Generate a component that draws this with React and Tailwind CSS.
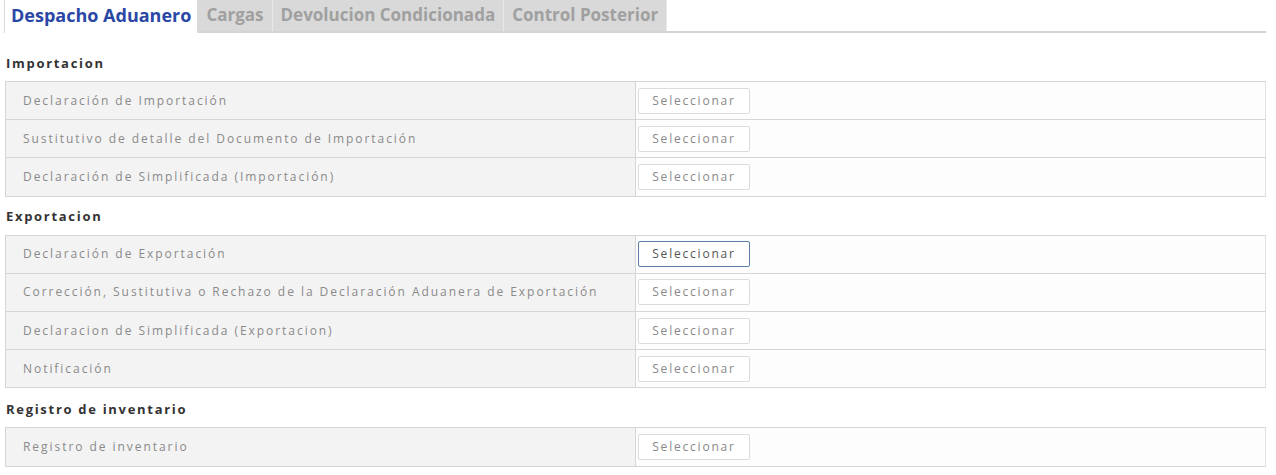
import React from "react";

const sections = [
  {
    title: "Importacion",
    h: "h-[48px]",
    rows: [
      "Declaración de Importación",
      "Sustitutivo de detalle del Documento de Importación",
      "Declaración de Simplificada (Importación)",
    ],
  },
  {
    title: "Exportacion",
    h: "h-[38px]",
    rows: [
      "Declaración de Exportación",
      "Corrección, Sustitutiva o Rechazo de la Declaración Aduanera de Exportación",
      "Declaracion de Simplificada (Exportacion)",
      "Notificación",
    ],
  },
  {
    title: "Registro de inventario",
    h: "h-[39px]",
    rows: ["Registro de inventario"],
  },
];

const tabFont = { fontFamily: '"Open Sans", sans-serif' };

export default function App() {
  return (
    <div className="w-[1276px] h-[475px] bg-white overflow-hidden" style={{ fontFamily: '"Open Sans", "DejaVu Sans", sans-serif' }}>
      <div className="flex items-end h-[33px] border-b-2 border-[#d4d4d4] mr-[10px] ml-[4px]">
        <div
          className="h-[35px] -mb-[2px] pb-[2px] px-[6px] flex items-center border-l border-t border-r border-[#dcdcdc] bg-white text-[18px] font-bold text-[#2a47a6]"
          style={tabFont}
        >
          Despacho Aduanero
        </div>
        {["Cargas", "Devolucion Condicionada", "Control Posterior"].map((t) => (
          <div
            key={t}
            className="h-[33px] px-[8px] flex items-center bg-[#d9d9d9] border-r border-[#e8e8e8] text-[17px] font-bold text-[#a0a0a0]"
            style={tabFont}
          >
            {t}
          </div>
        ))}
      </div>
      <div className="px-[5px] mr-[5px]">
        {sections.map((s) => (
          <div key={s.title}>
            <div className={s.h + " flex items-end pb-[8px] pl-[1px] text-[13px] font-bold text-[#333] tracking-[1.7px]"}>
              {s.title}
            </div>
            <div className="border-t border-[#d6d6d6]">
              {s.rows.map((r, i) => (
                <div key={r} className="flex h-[38.2px] border-b border-[#d6d6d6]">
                  <div className="w-[631px] bg-[#f3f3f3] border-l border-r border-[#d6d6d6] flex items-center pl-[17px] text-[12px] text-[#8a8a8a] tracking-[1.95px] whitespace-nowrap">
                    {r}
                  </div>
                  <div className="flex-1 bg-[#fdfdfd] border-r border-[#e2e2e2] flex items-center pl-[2px]">
                    <button
                      className={
                        "w-[112px] h-[26px] bg-white rounded-[2px] text-[12px] tracking-[1.8px] " +
                        (s.title === "Exportacion" && i === 0
                          ? "border border-[#5b7fa8] text-[#555]"
                          : "border border-[#dcdcdc] text-[#888]")
                      }
                      style={{ fontFamily: '"Open Sans", "DejaVu Sans", sans-serif' }}
                    >
                      Seleccionar
                    </button>
                  </div>
                </div>
              ))}
            </div>
          </div>
        ))}
      </div>
    </div>
  );
}
